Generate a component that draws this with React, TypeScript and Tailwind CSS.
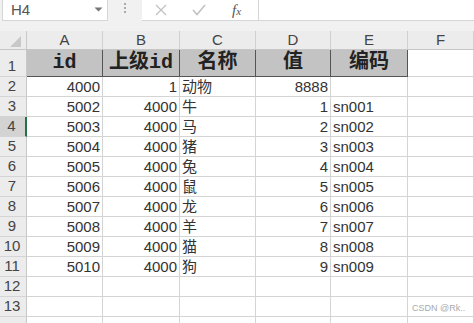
import { ChevronDown } from 'lucide-react';

const widths = ['w-[76px]', 'w-[77px]', 'w-[76px]', 'w-[75px]', 'w-[77px]', 'flex-1'];
const letters = ['A', 'B', 'C', 'D', 'E', 'F'];

type Row = [string, string, string, string, string];

const data: Row[] = [
  ['4000', '1', '动物', '8888', ''],
  ['5002', '4000', '牛', '1', 'sn001'],
  ['5003', '4000', '马', '2', 'sn002'],
  ['5004', '4000', '猪', '3', 'sn003'],
  ['5005', '4000', '兔', '4', 'sn004'],
  ['5006', '4000', '鼠', '5', 'sn005'],
  ['5007', '4000', '龙', '6', 'sn006'],
  ['5008', '4000', '羊', '7', 'sn007'],
  ['5009', '4000', '猫', '8', 'sn008'],
  ['5010', '4000', '狗', '9', 'sn009'],
];

const headers = ['id', '上级id', '名称', '值', '编码'];

// columns C and E hold text, so they sit on the left
const leftCols = [2, 4];

function RowHead({ n, active }: { n?: number; active?: boolean }) {
  return (
    <div
      className={
        'flex w-[27px] shrink-0 items-end justify-center border-b border-[#d4d4d4] pb-[1px] pr-[2px] text-[15px] leading-[18px] text-[#444] ' +
        (active ? 'border-r-2 border-r-[#217346] bg-[#d3d3d3]' : 'border-r border-r-[#c8c8c8] bg-[#ececec]')
      }
    >
      {n}
    </div>
  );
}

export default function App() {
  return (
    <div className="relative h-[323px] w-[474px] overflow-hidden bg-white font-['Liberation_Sans','Noto_Sans_CJK_SC',sans-serif] text-[#333]">
      {/* Formula bar */}
      <div className="flex h-[31px] items-start bg-[#f1f1f1]">
        <div className="ml-[2px] flex h-[21px] w-[106px] items-center justify-between border border-t-0 border-[#d6d6d6] bg-white pl-[8px] pr-[4px] text-[15px] text-[#555]">
          <span>H4</span>
          <svg width="9" height="5" viewBox="0 0 9 5" className="mb-[2px]">
            <path d="M0.5 0.5 L4.5 4.5 L8.5 0.5 Z" fill="#777" />
          </svg>
        </div>
        <div className="flex w-[34px] flex-col items-center gap-[2px] pt-[3px]">
          <span className="h-[2px] w-[2px] bg-[#aaa]" />
          <span className="h-[2px] w-[2px] bg-[#aaa]" />
          <span className="h-[2px] w-[2px] bg-[#aaa]" />
        </div>
        <div className="flex h-[21px] w-[116px] items-center border-b border-[#d6d6d6] bg-white">
          <svg width="12" height="12" viewBox="0 0 12 12" className="ml-[13px]">
            <path d="M1 1 L11 11 M11 1 L1 11" stroke="#c2c2c2" strokeWidth="1.3" />
          </svg>
          <svg width="14" height="12" viewBox="0 0 14 12" className="ml-[25px]">
            <path d="M1 6 L5 10.5 L13 1" stroke="#c2c2c2" strokeWidth="1.6" fill="none" />
          </svg>
          <span className="ml-[26px] font-['Liberation_Serif',serif] text-[15px] italic text-[#555]">
            f<span className="text-[11px]">x</span>
          </span>
        </div>
        <div className="h-[21px] flex-1 border-b border-l border-[#d6d6d6] bg-white" />
      </div>

      {/* Column headers */}
      <div className="flex h-[19px] border-b border-[#c6c6c6] bg-[#ececec]">
        <div className="flex w-[27px] shrink-0 items-end justify-end border-r border-[#c8c8c8] pb-[2px] pr-[5px]">
          <svg width="11" height="11" viewBox="0 0 11 11">
            <path d="M11 0 L11 11 L0 11 Z" fill="#c8c8c8" />
          </svg>
        </div>
        {letters.map((l, i) => (
          <div
            key={l}
            className={`${widths[i]} flex shrink-0 items-center justify-center border-r border-[#d0d0d0] text-[15px] text-[#444]`}
          >
            {l}
          </div>
        ))}
      </div>

      {/* Row 1: header cells */}
      <div className="flex h-[27px]">
        <RowHead n={1} />
        {headers.map((h, i) => (
          <div
            key={h}
            className={`${widths[i]} flex shrink-0 items-end justify-center border-b border-r border-[#555] bg-[#c3c3c3] pb-[1px] font-['Liberation_Mono','Noto_Sans_CJK_SC',monospace] text-[20px] font-bold leading-[24px] text-[#222]`}
          >
            {h}
          </div>
        ))}
        <div className="flex-1 border-b border-r border-[#d4d4d4]" />
      </div>

      {/* Data rows */}
      {data.map((row, r) => (
        <div key={r} className="flex h-[20px]">
          <RowHead n={r + 2} active={r === 2} />
          {row.map((v, i) => (
            <div
              key={i}
              className={`${widths[i]} flex shrink-0 items-end border-b border-r border-[#d4d4d4] pb-[1px] text-[15px] leading-[17px] ${
                leftCols.includes(i) ? 'justify-start pl-[2px]' : 'justify-end pr-[2px]'
              }`}
            >
              {v}
            </div>
          ))}
          <div className="flex-1 border-b border-r border-[#d4d4d4]" />
        </div>
      ))}

      {/* Empty rows; the last one is only a sliver at the bottom edge */}
      {[12, 13, 0].map((n) => (
        <div key={n} className="flex h-[20px]">
          <RowHead n={n || undefined} />
          {widths.map((w, i) => (
            <div key={i} className={`${w} shrink-0 border-b border-r border-[#d4d4d4]`} />
          ))}
        </div>
      ))}

      {/* Watermark */}
      <div className="absolute left-[412px] top-[302px] text-[9px] text-[#aaa]">CSDN @Rk..</div>
    </div>
  );
}
